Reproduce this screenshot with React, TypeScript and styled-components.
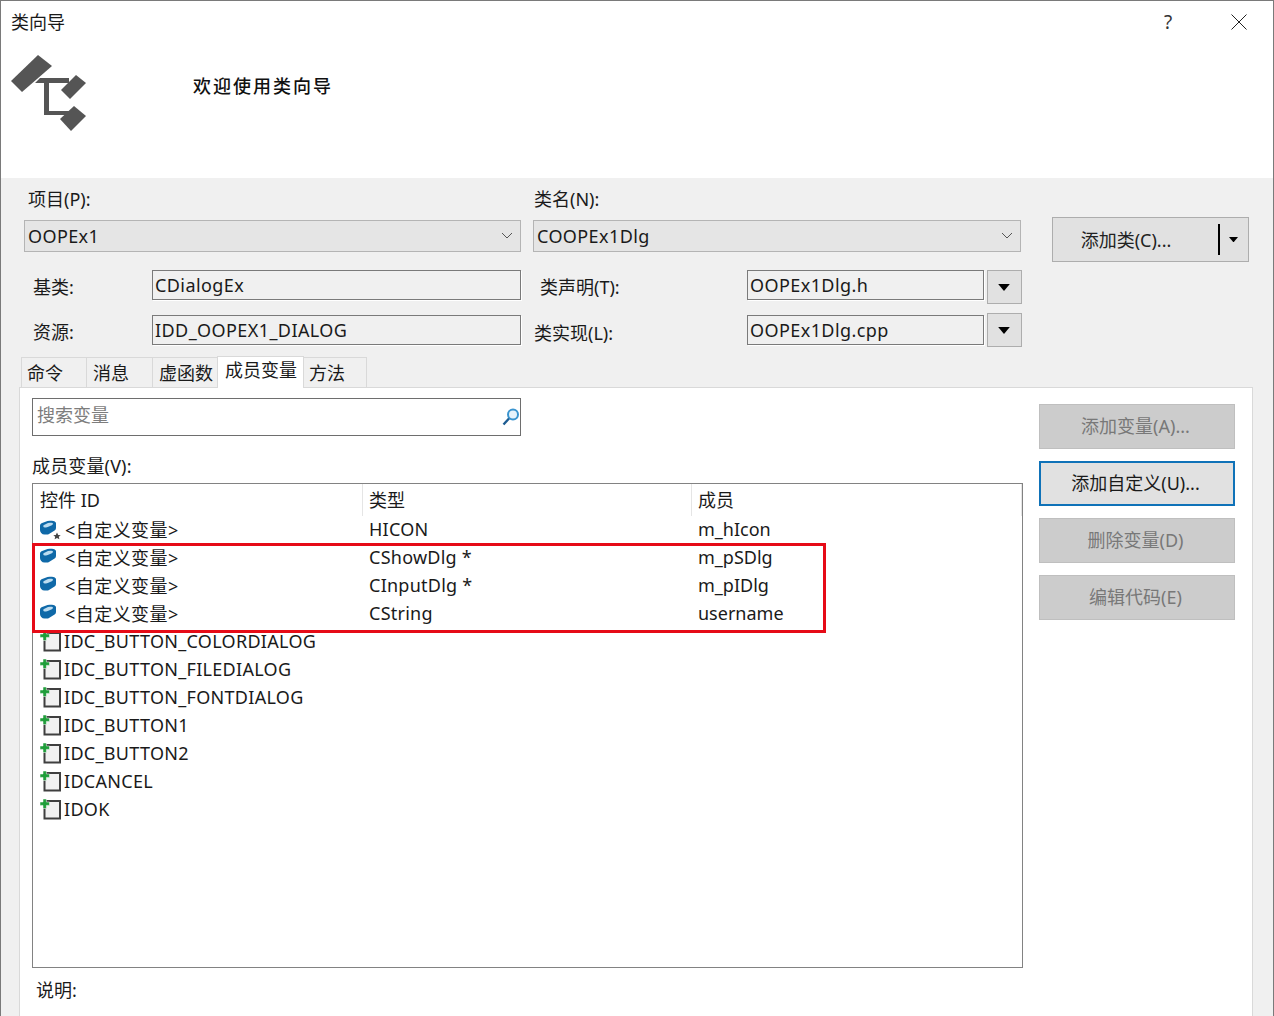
import React from "react";
import styled, { createGlobalStyle } from "styled-components";

const Global = createGlobalStyle`
  html, body { margin: 0; padding: 0; background: #fff; }
  #root { width: 1274px; height: 1016px; overflow: hidden; }
  * { box-sizing: border-box; }
`;

const FONT = `"Noto Sans", "Noto Sans CJK SC", sans-serif`;

const Window = styled.div`
  width: 1274px; height: 1016px; overflow: hidden;
  display: flex; flex-direction: column;
  border: 1px solid #7a7a7a; border-bottom: 0;
  font-family: ${FONT}; font-size: 18px; color: #1a1a1a; line-height: 24px;
`;
const Header = styled.header`
  height: 177px; flex: none; background: #fff; display: flex; flex-direction: column;
`;
const TitleBar = styled.div`
  height: 42px; display: flex; align-items: center; padding: 0 26px 0 10px;
`;
const Title = styled.span` flex: 1; `;
const Help = styled.span` width: 20px; text-align: center; margin-right: 53px; color: #333; font-size: 19px; `;
const Banner = styled.div` display: flex; align-items: flex-start; padding: 12px 0 0 10px; `;
const Welcome = styled.h1`
  margin: 19px 0 0 106px; font-size: 18px; font-weight: 500; letter-spacing: 2px; color: #111; line-height: 24px;
`;
const Body = styled.main` flex: 1; min-height: 0; background: #f0f0f0; display: flex; flex-direction: column; `;
const Form = styled.section` display: flex; padding: 9px 0 0 23px; `;
const LeftCol = styled.div` width: 497px; margin-right: 12px; display: flex; flex-direction: column; `;
const MidCol = styled.div` width: 489px; margin-right: 30px; display: flex; flex-direction: column; `;
const RightCol = styled.div` width: 197px; padding-top: 30px; `;
const TopLabel = styled.label<{ $pad: number }>` height: 24px; padding-left: ${p => p.$pad}px; margin-bottom: 9px; `;
const Select = styled.div<{ $narrow?: boolean }>`
  height: 32px; background: #e5e5e5; border: 1px solid #b4b4b4; display: flex; align-items: center;
  justify-content: space-between; padding: 0 7px 0 3px; margin: 0 ${p => (p.$narrow ? 1 : 0)}px 18px 0;
  letter-spacing: 0.4px;
`;
const FieldRow = styled.div<{ $gapTop?: number }>`
  height: 30px; display: flex; align-items: flex-start; margin-top: ${p => p.$gapTop ?? 0}px;
`;
const FieldLabel = styled.label<{ $w: number; $pad: number; $low?: boolean }>`
  width: ${p => p.$w}px; padding-left: ${p => p.$pad}px; flex: none; line-height: ${p => (p.$low ? 36 : 34)}px;
`;
const ReadOnly = styled.div<{ $w: number }>`
  width: ${p => p.$w}px; height: 30px; flex: none; border: 1px solid #7a7a7a; background: #f0f0f0;
  box-shadow: 1px 1px 0 #fff; padding: 0 2px; line-height: 28px; white-space: nowrap; letter-spacing: 0.42px;
`;
const DropBtn = styled.button<{ $up?: boolean }>`
  width: 35px; height: 34px; flex: none; margin: ${p => (p.$up ? "-2px" : "0")} 0 0 3px; padding: 0 2px 0 0;
  background: #e1e1e1; border: 1px solid #adadad; display: flex; align-items: center; justify-content: center;
`;
const SplitBtn = styled.button`
  width: 197px; height: 45px; background: #e1e1e1; border: 1px solid #adadad; padding: 0;
  display: flex; align-items: center; font: inherit; color: #222;
`;
const SplitText = styled.span` width: 146px; text-align: center; white-space: nowrap; margin-right: 19px; `;
const SplitBar = styled.span` width: 2px; height: 31px; background: #000; margin-right: 9px; `;

const TabBar = styled.nav` height: 31px; margin-top: 11px; padding-left: 20px; display: flex; align-items: flex-end; flex: none; `;
const Tab = styled.div<{ $w: number; $pad: number; $active?: boolean }>`
  width: ${p => p.$w}px; height: ${p => (p.$active ? 32 : 30)}px; flex: none;
  background: ${p => (p.$active ? "#fff" : "#f0f0f0")};
  border: 1px solid #d9d9d9; border-bottom: 0;
  margin-right: -1px; padding-left: ${p => p.$pad}px; line-height: ${p => (p.$active ? 26 : 30)}px;
  position: relative; z-index: ${p => (p.$active ? 2 : 0)}; margin-bottom: ${p => (p.$active ? -1 : 0)}px;
`;
const Panel = styled.section`
  margin: 0 20px 0 18px; flex: 1; min-height: 0; background: #fff; border: 1px solid #d9d9d9; border-bottom: 0;
  display: flex; padding: 10px 0 0 12px; position: relative; z-index: 1;
`;
const LeftArea = styled.div` width: 991px; flex: none; display: flex; flex-direction: column; `;
const Search = styled.div`
  width: 489px; height: 38px; border: 1px solid #6e6e6e; display: flex; align-items: center;
  justify-content: space-between; padding: 0 0 0 4px; color: #7d7d7d; line-height: 32px;
`;
const SearchText = styled.span` height: 36px; `;
const SectionLabel = styled.label` margin-top: 18px; height: 24px; letter-spacing: 0.15px; `;
const List = styled.div` margin-top: 5px; height: 485px; border: 1px solid #828282; position: relative; flex: none; `;
const Columns = styled.div` display: grid; grid-template-columns: 330px 329px 1fr; height: 31px; `;
const HeadCell = styled.div<{ $pad: number }>`
  padding-left: ${p => p.$pad}px; border-right: 1px solid #e5e5e5; line-height: 32px; white-space: nowrap;
`;
const Row = styled.div` display: grid; grid-template-columns: 330px 329px 1fr; height: 28px; align-items: center; `;
const NameCell = styled.div` display: flex; align-items: center; padding-left: 5px; white-space: nowrap; height: 28px; `;
const CustomName = styled.span` letter-spacing: 0.45px; padding-top: 1px; margin-left: 2px; `;
const ResourceName = styled.span` letter-spacing: 0.3px; `;
const Cell = styled.div<{ $pad: number; $spaced?: boolean }>`
  padding-left: ${p => p.$pad}px; white-space: nowrap; letter-spacing: ${p => (p.$spaced ? 0.25 : 0)}px;
`;
const Highlight = styled.div`
  position: absolute; left: -1px; top: 59px; width: 794px; height: 90px; border: 3px solid #e60b17; pointer-events: none;
`;
const Note = styled.label` margin-top: 10px; padding-left: 4px; height: 24px; `;
const Actions = styled.div` width: 196px; margin-left: 16px; padding-top: 6px; display: flex; flex-direction: column; gap: 12px; `;
const ActionBtn = styled.button<{ $primary?: boolean }>`
  height: 45px; font: inherit; padding: 0 3px 2px 0; white-space: nowrap;
  background: ${p => (p.$primary ? "#e1e1e1" : "#cccccc")};
  color: ${p => (p.$primary ? "#1a1a1a" : "#787878")};
  border: ${p => (p.$primary ? "2px solid #0f72b8" : "1px solid #bfbfbf")};
`;

const Logo = () => (
  <svg width="76" height="77" viewBox="0 0 76 77" fill="#555555">
    <polygon points="27,0 41,11 11,37 0,26" />
    <polygon points="65,20 75,28 59,44 50,35" />
    <polygon points="63,51 75,61 60,76 49,64" />
    <path d="M33 28H24L29 23H58V28H38V56H58V60H33z" />
  </svg>
);
const Chevron = () => (
  <svg width="12" height="8" viewBox="0 0 12 8"><path d="M1 1l5 5 5-5" fill="none" stroke="#555" strokeWidth="1" /></svg>
);
const Caret = ({ w = 10 }: { w?: number }) => (
  <svg width={w} height={w / 2 + 1} viewBox="0 0 10 6"><path d="M0 0h10L5 6z" fill="#000" /></svg>
);
const Close = () => (
  <svg width="16" height="16" viewBox="0 0 16 16"><path d="M.5.5l15 15M15.5.5l-15 15" stroke="#222" strokeWidth="1" fill="none" /></svg>
);
const Magnifier = () => (
  <svg width="18" height="20" viewBox="0 0 18 20">
    <circle cx="11" cy="7.5" r="5" fill="#e6f3fb" stroke="#3a94cf" strokeWidth="2" />
    <path d="M7 11.5L1.5 17.5" stroke="#1d5c92" strokeWidth="2.4" />
  </svg>
);
const Cube = ({ star }: { star?: boolean }) => (
  <svg width="24" height="24" viewBox="0 0 24 24" style={{ flex: "none", marginRight: 1 }}>
    <g transform="translate(0 1)">
      <path d="M2 7.5 Q2 6 3.5 5.3 L9.5 3 Q10.5 2.7 11.5 2.7 H14 Q16.8 2.7 18 4.8 V10 Q18 11.6 16.6 12.4 L11 16 Q10 16.6 9 16.6 H6.5 Q4.5 16.6 3.2 15 Q2 13.6 2 12z" fill="#0f69a8" />
      <path d="M5.5 7.2 10 5.1 Q11 4.7 12 4.7 H13.4 Q15 4.7 15 5.8 Q15 6.6 13.8 7.2 L9.8 9 Q9 9.4 8 9.4 H6.8 Q4.8 9.4 5.5 7.2z" fill="#bcdcf0" />
    </g>
    {star && <path d="M19 15.5l1.2 2.4 2.5.3-1.9 1.6.6 2.5-2.4-1.3-2.4 1.3.6-2.5-1.9-1.6 2.5-.3z" fill="#444" />}
  </svg>
);
const Resource = () => (
  <svg width="26" height="24" viewBox="0 0 26 24" style={{ flex: "none" }}>
    <rect x="6.5" y="4" width="15.5" height="17.5" fill="#f1f1f1" stroke="#3f3f3f" strokeWidth="2" />
    <path d="M5 2h3.4v3H11.5v3.4H8.4V11.5H5V8.4H2V5H5z" fill="#1f9d3a" stroke="#fff" strokeWidth="0.5" />
  </svg>
);

const customRows = [
  ["HICON", "m_hIcon"],
  ["CShowDlg *", "m_pSDlg"],
  ["CInputDlg *", "m_pIDlg"],
  ["CString", "username"],
];
const resourceRows = [
  "IDC_BUTTON_COLORDIALOG",
  "IDC_BUTTON_FILEDIALOG",
  "IDC_BUTTON_FONTDIALOG",
  "IDC_BUTTON1",
  "IDC_BUTTON2",
  "IDCANCEL",
  "IDOK",
];

export default function App() {
  return (
    <>
      <Global />
      <Window>
        <Header>
          <TitleBar>
            <Title>类向导</Title>
            <Help>?</Help>
            <Close />
          </TitleBar>
          <Banner>
            <Logo />
            <Welcome>欢迎使用类向导</Welcome>
          </Banner>
        </Header>
        <Body>
          <Form>
            <LeftCol>
              <TopLabel $pad={4}>项目(P):</TopLabel>
              <Select>OOPEx1<Chevron /></Select>
              <FieldRow>
                <FieldLabel $w={128} $pad={9}>基类:</FieldLabel>
                <ReadOnly $w={369}>CDialogEx</ReadOnly>
              </FieldRow>
              <FieldRow $gapTop={15}>
                <FieldLabel $w={128} $pad={9}>资源:</FieldLabel>
                <ReadOnly $w={369}>IDD_OOPEX1_DIALOG</ReadOnly>
              </FieldRow>
            </LeftCol>
            <MidCol>
              <TopLabel $pad={1}>类名(N):</TopLabel>
              <Select $narrow>COOPEx1Dlg<Chevron /></Select>
              <FieldRow>
                <FieldLabel $w={214} $pad={7}>类声明(T):</FieldLabel>
                <ReadOnly $w={237}>OOPEx1Dlg.h</ReadOnly>
                <DropBtn aria-label="类声明"><Caret w={12} /></DropBtn>
              </FieldRow>
              <FieldRow $gapTop={15}>
                <FieldLabel $w={214} $pad={1} $low>类实现(L):</FieldLabel>
                <ReadOnly $w={237}>OOPEx1Dlg.cpp</ReadOnly>
                <DropBtn $up aria-label="类实现"><Caret w={12} /></DropBtn>
              </FieldRow>
            </MidCol>
            <RightCol>
              <SplitBtn>
                <SplitText>添加类(C)...</SplitText>
                <SplitBar />
                <Caret w={9} />
              </SplitBtn>
            </RightCol>
          </Form>
          <TabBar>
            <Tab $w={66} $pad={5}>命令</Tab>
            <Tab $w={67} $pad={6}>消息</Tab>
            <Tab $w={66} $pad={6}>虚函数</Tab>
            <Tab $w={87} $pad={7} $active>成员变量</Tab>
            <Tab $w={64} $pad={5}>方法</Tab>
          </TabBar>
          <Panel>
            <LeftArea>
              <Search><SearchText>搜索变量</SearchText><Magnifier /></Search>
              <SectionLabel>成员变量(V):</SectionLabel>
              <List>
                <Columns>
                  <HeadCell $pad={7}>控件 ID</HeadCell>
                  <HeadCell $pad={6}>类型</HeadCell>
                  <HeadCell $pad={6}>成员</HeadCell>
                </Columns>
                {customRows.map(([type, member], i) => (
                  <Row key={member}>
                    <NameCell><Cube star={i === 0} /><CustomName>&lt;自定义变量&gt;</CustomName></NameCell>
                    <Cell $pad={6} $spaced>{type}</Cell>
                    <Cell $pad={6}>{member}</Cell>
                  </Row>
                ))}
                {resourceRows.map(name => (
                  <Row key={name}>
                    <NameCell><Resource /><ResourceName>{name}</ResourceName></NameCell>
                  </Row>
                ))}
                <Highlight />
              </List>
              <Note>说明:</Note>
            </LeftArea>
            <Actions>
              <ActionBtn>添加变量(A)...</ActionBtn>
              <ActionBtn $primary>添加自定义(U)...</ActionBtn>
              <ActionBtn>删除变量(D)</ActionBtn>
              <ActionBtn>编辑代码(E)</ActionBtn>
            </Actions>
          </Panel>
        </Body>
      </Window>
    </>
  );
}
